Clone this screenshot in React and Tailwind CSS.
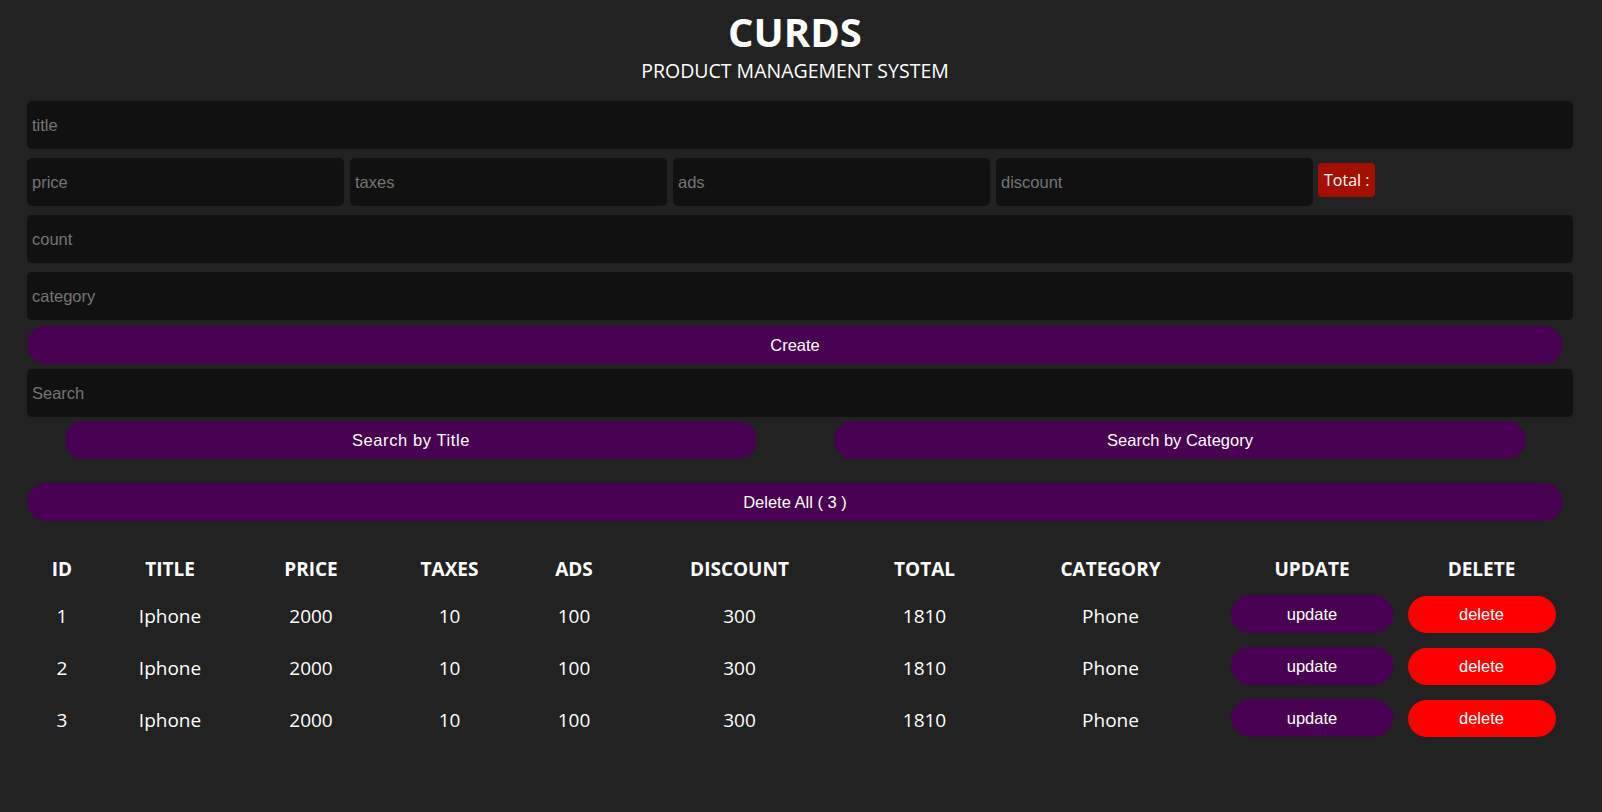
import React from 'react';

const rows = [
  { id: 1, title: 'Iphone', price: 2000, taxes: 10, ads: 100, discount: 300, total: 1810, category: 'Phone' },
  { id: 2, title: 'Iphone', price: 2000, taxes: 10, ads: 100, discount: 300, total: 1810, category: 'Phone' },
  { id: 3, title: 'Iphone', price: 2000, taxes: 10, ads: 100, discount: 300, total: 1810, category: 'Phone' },
];

const cols = 'grid grid-cols-[70px_146px_136px_141px_108px_223px_147px_225px_178px_161px]';

const inputCls =
  "h-[48px] rounded-[5px] bg-[#111111] pl-[5px] text-[16.5px] text-white outline-none placeholder:text-[#757575] font-['Liberation_Sans',Arial,sans-serif]";

const pillCls =
  "h-[38px] rounded-full bg-[#480050] text-white text-[16.5px] font-['Liberation_Sans',Arial,sans-serif]";

export default function App() {
  return (
    <div className="min-h-[812px] w-full bg-[#222222] text-white font-['Open_Sans',sans-serif]">
      <div className="w-[1587px] pt-[8px] pl-[27px] pr-[14px]">
        {/* Header */}
        <div className="text-center pr-[10px]">
          <h1 className="text-[40px] font-bold leading-[48px]">CURDS</h1>
          <p className="text-[19.5px] leading-[24px] mt-[3px]">PRODUCT MANAGEMENT SYSTEM</p>
        </div>

        {/* Form */}
        <div className="mt-[18px] flex flex-col">
          <input className={`${inputCls} w-full`} placeholder="title" />
          <div className="mt-[9px] flex items-center gap-[6px]">
            <input className={`${inputCls} w-[317px]`} placeholder="price" />
            <input className={`${inputCls} w-[317px]`} placeholder="taxes" />
            <input className={`${inputCls} w-[317px]`} placeholder="ads" />
            <input className={`${inputCls} w-[317px]`} placeholder="discount" />
            <span className="ml-[-1px] mb-[4px] flex h-[34px] items-center rounded-[4px] bg-[#a30f00] px-[6px] text-[16px]">
              Total :
            </span>
          </div>
          <input className={`${inputCls} mt-[9px] w-full`} placeholder="count" />
          <input className={`${inputCls} mt-[9px] w-full`} placeholder="category" />
          <button className={`${pillCls} mt-[6px] w-[1536px]`}>Create</button>
          <input className={`${inputCls} mt-[5px] w-full`} placeholder="Search" />
          <div className="mt-[4px] flex gap-[77px] pl-[38px]">
            <button className={`${pillCls} w-[692px] tracking-[0.6px]`}>Search by Title</button>
            <button className={`${pillCls} w-[692px]`}>Search by Category</button>
          </div>
          <button className={`${pillCls} mt-[24px] h-[37px] w-[1536px]`}>Delete All ( 3 )</button>
        </div>

        {/* Table */}
        <div className="mt-[27px]">
          <div className={`${cols} h-[40px] items-center pt-[3px] text-center text-[19px] font-bold`}>
            <div>ID</div>
            <div>TITLE</div>
            <div>PRICE</div>
            <div>TAXES</div>
            <div>ADS</div>
            <div>DISCOUNT</div>
            <div>TOTAL</div>
            <div>CATEGORY</div>
            <div>UPDATE</div>
            <div>DELETE</div>
          </div>
          {rows.map((r) => (
            <div key={r.id} className={`${cols} h-[52px] items-center text-center text-[19px]`}>
              <div className="pt-[4px]">{r.id}</div>
              <div className="pt-[4px]">{r.title}</div>
              <div className="pt-[4px]">{r.price}</div>
              <div className="pt-[4px]">{r.taxes}</div>
              <div className="pt-[4px]">{r.ads}</div>
              <div className="pt-[4px]">{r.discount}</div>
              <div className="pt-[4px]">{r.total}</div>
              <div className="pt-[4px]">{r.category}</div>
              <div className="px-[8px]">
                <button className={`${pillCls} h-[37px] w-[162px]`}>update</button>
              </div>
              <div className="px-[6px]">
                <button className="h-[37px] w-[148px] rounded-full bg-[#ff0000] text-[16.5px] text-white font-['Liberation_Sans',Arial,sans-serif]">
                  delete
                </button>
              </div>
            </div>
          ))}
        </div>
      </div>
    </div>
  );
}
